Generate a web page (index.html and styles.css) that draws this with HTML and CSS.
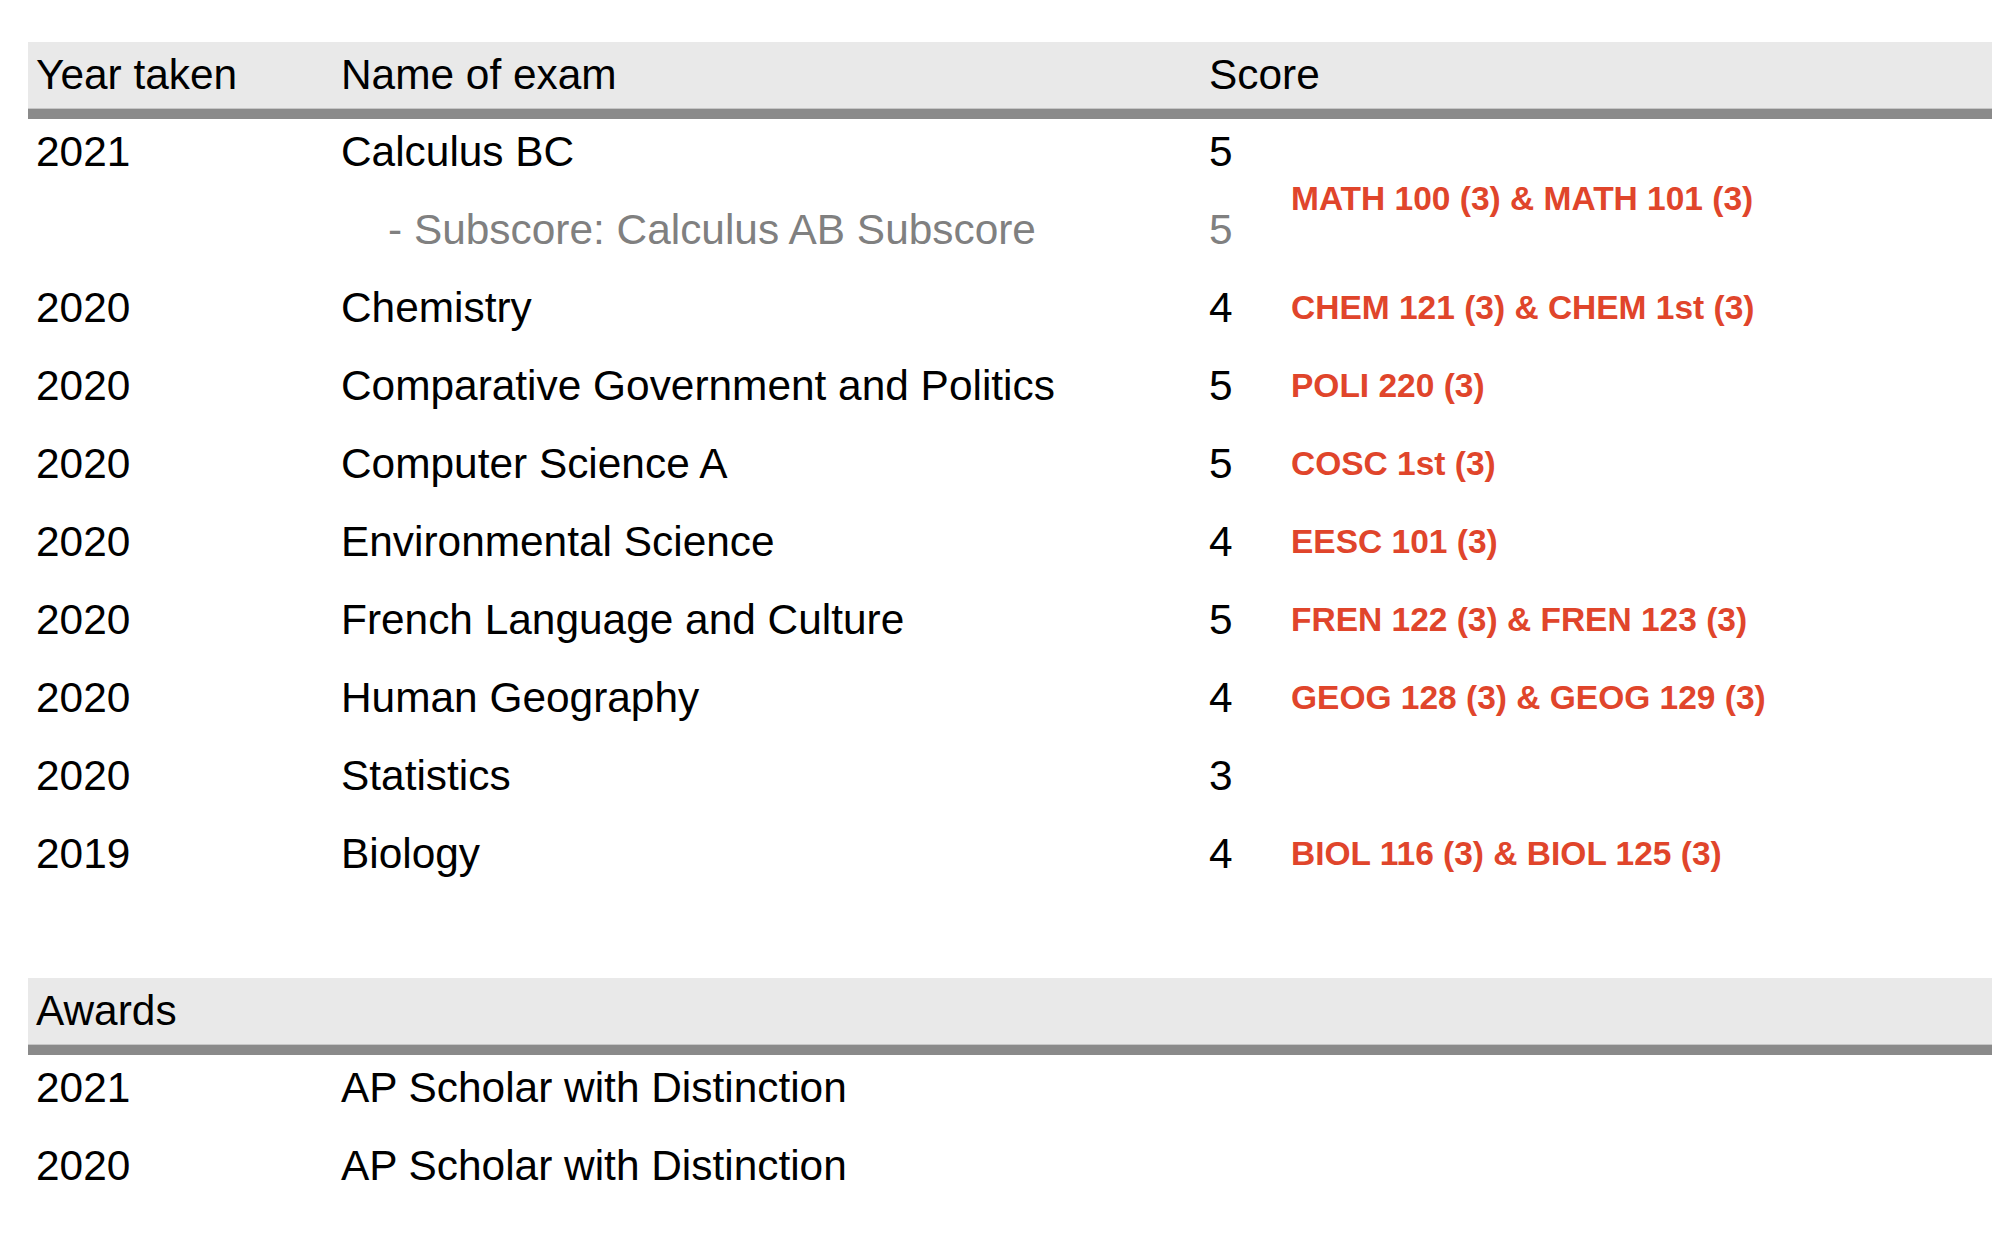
FILE: index.html
```html
<!DOCTYPE html>
<html lang="en">
<head>
<meta charset="utf-8">
<title>AP Scores</title>
<link rel="stylesheet" href="styles.css">
</head>
<body>
<div class="page">
  <table class="scores">
    <colgroup>
      <col class="c-year"><col class="c-name"><col class="c-score"><col class="c-credit">
    </colgroup>
    <thead>
      <tr><th>Year taken</th><th>Name of exam</th><th colspan="2">Score</th></tr>
    </thead>
    <tbody>
      <tr><td>2021</td><td>Calculus BC</td><td>5</td><td class="credit credit-span" rowspan="2"><span class="note">MATH 100 (3) &amp; MATH 101 (3)</span></td></tr>
      <tr class="sub"><td></td><td class="sub-name">- Subscore: Calculus AB Subscore</td><td>5</td></tr>
      <tr><td>2020</td><td>Chemistry</td><td>4</td><td class="credit"><span class="note">CHEM 121 (3) &amp; CHEM 1st (3)</span></td></tr>
      <tr><td>2020</td><td>Comparative Government and Politics</td><td>5</td><td class="credit"><span class="note">POLI 220 (3)</span></td></tr>
      <tr><td>2020</td><td>Computer Science A</td><td>5</td><td class="credit"><span class="note">COSC 1st (3)</span></td></tr>
      <tr><td>2020</td><td>Environmental Science</td><td>4</td><td class="credit"><span class="note">EESC 101 (3)</span></td></tr>
      <tr><td>2020</td><td>French Language and Culture</td><td>5</td><td class="credit"><span class="note">FREN 122 (3) &amp; FREN 123 (3)</span></td></tr>
      <tr><td>2020</td><td>Human Geography</td><td>4</td><td class="credit"><span class="note">GEOG 128 (3) &amp; GEOG 129 (3)</span></td></tr>
      <tr><td>2020</td><td>Statistics</td><td>3</td><td class="credit"></td></tr>
      <tr><td>2019</td><td>Biology</td><td>4</td><td class="credit"><span class="note">BIOL 116 (3) &amp; BIOL 125 (3)</span></td></tr>
    </tbody>
  </table>

  <table class="scores awards">
    <colgroup>
      <col class="c-year"><col class="c-name"><col class="c-score"><col class="c-credit">
    </colgroup>
    <thead>
      <tr><th colspan="4">Awards</th></tr>
    </thead>
    <tbody>
      <tr><td>2021</td><td>AP Scholar with Distinction</td><td></td><td></td></tr>
      <tr><td>2020</td><td>AP Scholar with Distinction</td><td></td><td></td></tr>
    </tbody>
  </table>
</div>
</body>
</html>
```

FILE: styles.css
```css
html, body {
  margin: 0;
  padding: 0;
  background: #ffffff;
}

.page {
  padding: 42px 24px 0 28px;
  font-family: "Liberation Sans", Arial, Helvetica, sans-serif;
  color: #000000;
}

.scores {
  width: 100%;
  table-layout: fixed;
  border-collapse: separate;
  border-spacing: 0;
  font-size: 42.4px;
  line-height: 48px;
}

.c-year { width: 305px; }
.c-name { width: 868px; }
.c-score { width: 82px; }

.scores th {
  text-align: left;
  font-weight: normal;
  background: #e9e9e9;
  padding: 9px 8px 10px;
  border-bottom: 10px solid #8a8a8a;
  box-shadow: inset 0 -1px 0 #c6c6c6;
  white-space: nowrap;
}

.scores th:first-child {
  padding-left: 8px;
}

.scores td {
  padding: 9px 8px 21px;
  vertical-align: baseline;
  white-space: nowrap;
}

.scores td:first-child {
  padding-left: 8px;
}

.sub td {
  color: #808080;
}

.scores td.sub-name {
  padding-left: 55px;
}

.scores td.credit {
  color: #e0452b;
  font-weight: bold;
  font-size: 33.5px;
  line-height: 38px;
  padding-left: 8px;
}

.note {
  vertical-align: 3px;
}

.scores td.credit-span {
  vertical-align: middle;
  padding-top: 4px;
  padding-bottom: 0;
}

.credit-span .note {
  vertical-align: baseline;
}

.awards {
  margin-top: 79px;
}
```
